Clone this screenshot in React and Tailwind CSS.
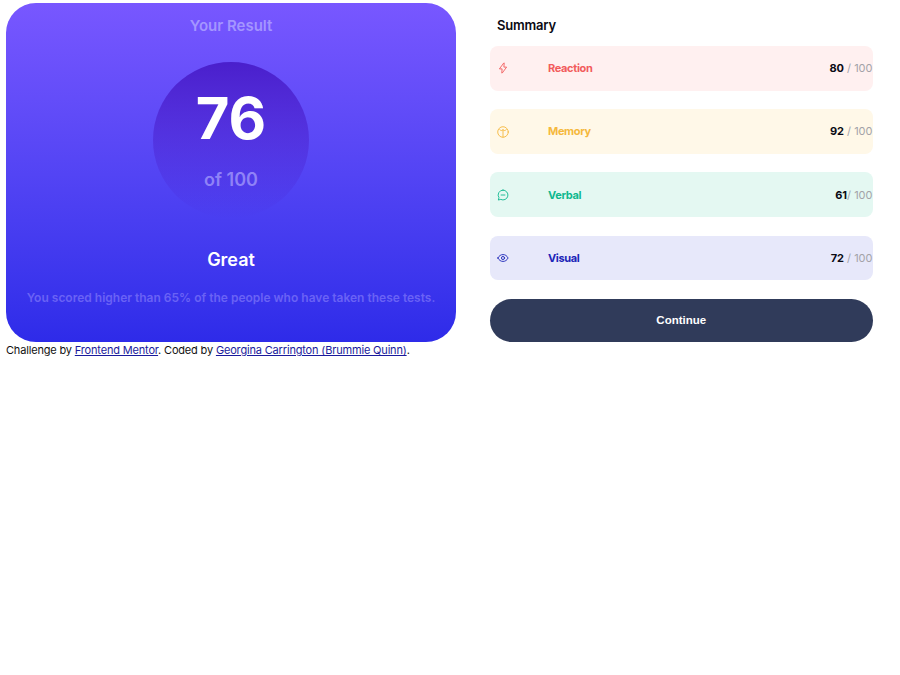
const rows = [
  { name: "Reaction", score: "80", gap: " ", bg: "bg-[#fff0f0]", fg: "text-[#f25c5c]", icon: "bolt" },
  { name: "Memory", score: "92", gap: " ", bg: "bg-[#fff8e8]", fg: "text-[#f5b83d]", icon: "brain" },
  { name: "Verbal", score: "61", gap: "", bg: "bg-[#e4f8f2]", fg: "text-[#0fb88f]", icon: "chat" },
  { name: "Visual", score: "72", gap: " ", bg: "bg-[#e7e8fa]", fg: "text-[#1c25b8]", icon: "eye" },
];

function Icon({ kind }) {
  const common = { width: 12, height: 12, viewBox: "0 0 20 20", fill: "none", stroke: "currentColor", strokeWidth: 1.5, strokeLinecap: "round", strokeLinejoin: "round" };
  if (kind === "bolt")
    return (
      <svg {...common}>
        <path d="M11 2 4 11.500h4.500L8 18" />
        <path d="M9 18l7-9.500h-4.500L12 2" />
      </svg>
    );
  if (kind === "brain")
    return (
      <svg {...common}>
        <circle cx="10" cy="10" r="8.800" />
        <path d="M10 6v12.500" />
        <path d="M4.500 6c1.500 2.200 3.800 2.200 5.500 0 1.700 2.200 4 2.200 5.500 0" />
      </svg>
    );
  if (kind === "chat")
    return (
      <svg {...common}>
        <path d="M10 1.800a8.200 8.200 0 1 1-3.700 15.500L2.200 18.400l1.100-3.900A8.200 8.200 0 0 1 10 1.800Z" />
        <path d="M6.800 10h6.400" />
      </svg>
    );
  return (
    <svg {...common}>
      <path d="M1.500 10C3.500 6.200 6.400 4.300 10 4.300s6.500 1.900 8.500 5.700c-2 3.800-4.900 5.700-8.500 5.700S3.500 13.800 1.500 10Z" />
      <circle cx="10" cy="10" r="2.600" />
    </svg>
  );
}

function Row({ row }) {
  return (
    <div className={`flex h-[44.800px] items-center rounded-lg ${row.bg}`}>
      <span className={`ml-[6.500px] flex w-[51.500px] shrink-0 ${row.fg}`}>
        <Icon kind={row.icon} />
      </span>
      <span className={`text-[11px] font-bold tracking-[-0.35px] ${row.fg}`}>{row.name}</span>
      <span className="ml-auto whitespace-pre text-[11px] text-[#a3a3a8]">
        <b className="font-bold text-[#0a0a14]">{row.score}</b>
        {row.gap}/ 100
      </span>
    </div>
  );
}

export default function App() {
  return (
    <div className="min-h-[675px] bg-white pl-[6px] pt-[3px] font-['Inter',sans-serif] text-black">
      <div className="flex items-start">
        <div className="flex h-[339px] w-[450px] flex-col items-center rounded-[30px] bg-gradient-to-b from-[#7857ff] to-[#2e2be9] text-center">
          <h1 className="mt-[13px] text-[15px] leading-5 font-semibold text-[#a495ff]">Your Result</h1>
          <div className="mt-[26px] flex h-[156px] w-[156px] flex-col items-center rounded-full bg-gradient-to-b from-[#4a1fcc] to-[#4a2ef000]">
            <div className="mt-[18px] text-[58px] leading-[76px] font-bold text-white">76</div>
            <div className="mt-[12px] text-[18px] leading-6 font-semibold text-[#8f82f7]">of 100</div>
          </div>
          <div className="mt-[30px] text-[18px] leading-6 font-semibold text-white">Great</div>
          <p className="mt-[16px] text-[12px] leading-5 font-semibold text-[#6a62f5]">
            You scored higher than 65% of the people who have taken these tests.
          </p>
        </div>
        <div className="ml-[34px] w-[382.500px]">
          <h2 className="mt-[13px] ml-[7px] text-[13px] leading-[18px] font-semibold tracking-[-0.2px] text-[#0a0a14]">Summary</h2>
          <div className="mt-[12px] flex flex-col gap-[18.400px]">
            {rows.map((r) => (
              <Row key={r.name} row={r} />
            ))}
            <button className="h-[43.600px] rounded-full bg-[#303b5a] font-['Liberation_Sans',sans-serif] text-[11.500px] font-bold text-white">
              Continue
            </button>
          </div>
        </div>
      </div>
      <p className="mt-[1px] text-[11px] leading-[15px] tracking-[-0.17px] text-[#111]">
        Challenge by <a href="#" className="text-[#1a1a9c] underline">Frontend Mentor</a>. Coded by{" "}
        <a href="#" className="text-[#1a1a9c] underline">Georgina Carrington (Brummie Quinn)</a>.
      </p>
    </div>
  );
}
